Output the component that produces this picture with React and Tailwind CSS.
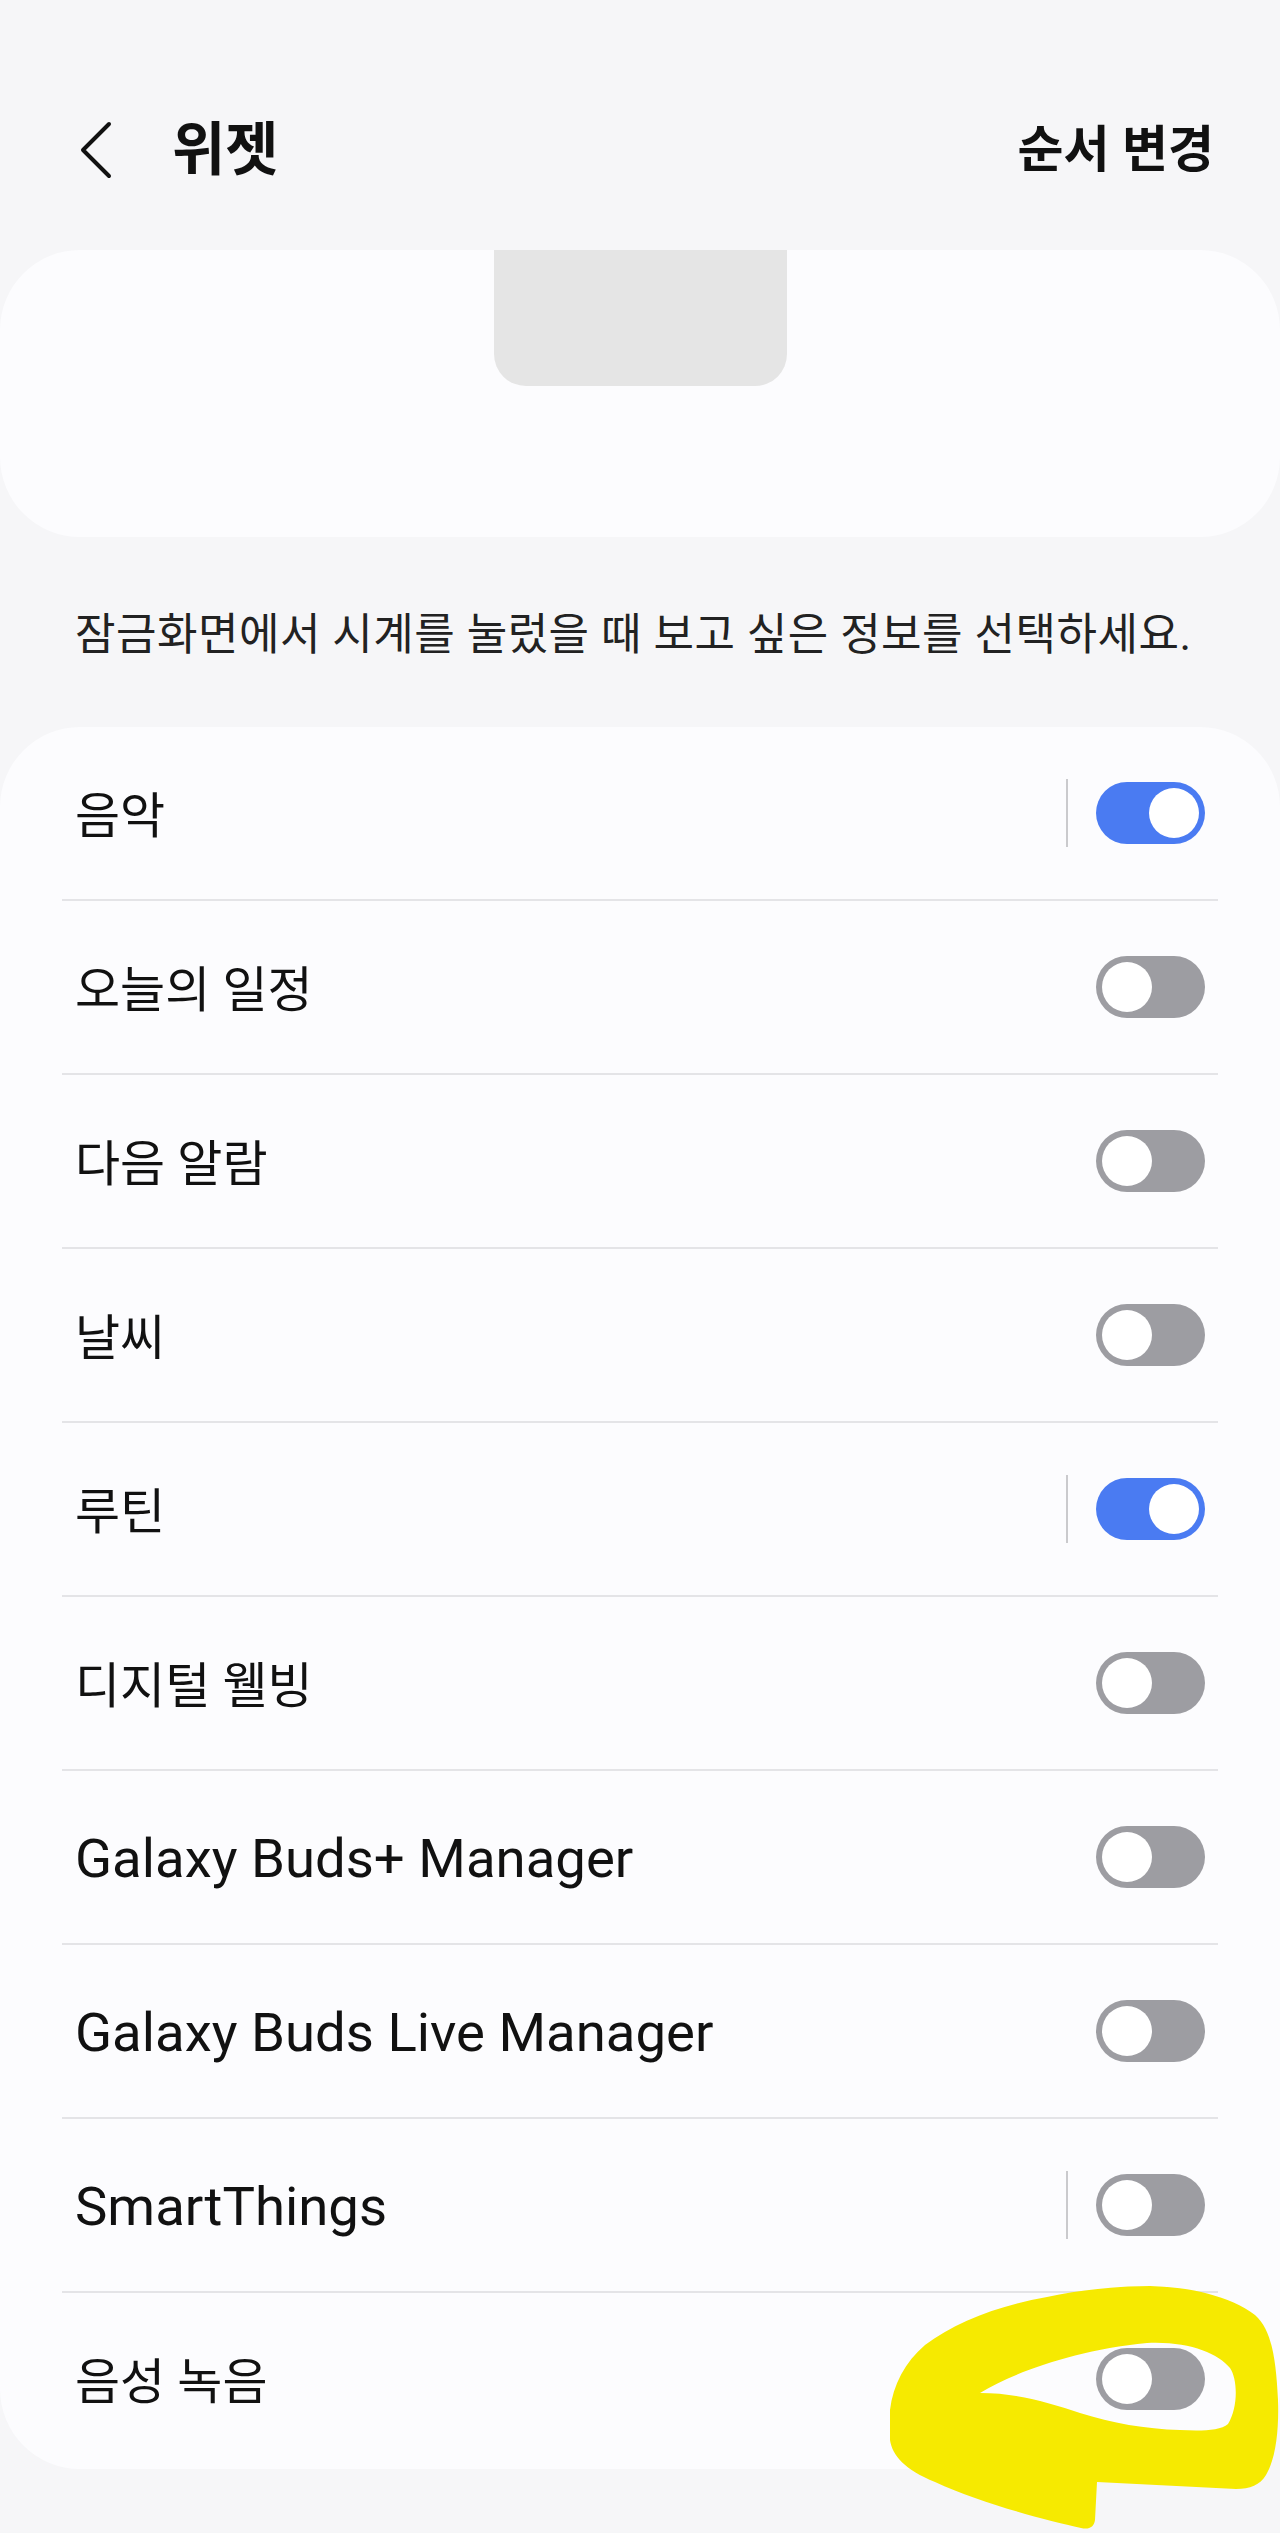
import React from 'react';

const items = [
    { label: '음악', on: true, bar: true },
    { label: '오늘의 일정', on: false },
    { label: '다음 알람', on: false },
    { label: '날씨', on: false },
    { label: '루틴', on: true, bar: true },
    { label: '디지털 웰빙', on: false },
    { label: 'Galaxy Buds+ Manager', on: false, latin: true },
    { label: 'Galaxy Buds Live Manager', on: false, latin: true },
    { label: 'SmartThings', on: false, bar: true, latin: true },
    { label: '음성 녹음', on: false },
];

function Toggle({ on }) {
    return (
        <div
            className={
                on
                    ? 'flex h-[62px] w-[109px] items-center justify-end rounded-full bg-[#4a7bf2] p-[6px]'
                    : 'flex h-[62px] w-[109px] items-center justify-start rounded-full bg-[#9d9da2] p-[6px]'
            }
        >
            <div className="h-[50px] w-[50px] rounded-full bg-white" />
        </div>
    );
}

function Row({ item }) {
    return (
        <div className="flex h-[172px] items-center pl-[13px] pr-[13px]">
            <span
                className={
                    item.latin
                        ? 'flex-1 pt-[4px] text-[54.5px] text-[#111]'
                        : 'flex-1 pt-[8px] text-[49px] text-[#111]'
                }
            >
                {item.label}
            </span>
            {item.bar && <div className="mr-[28px] h-[68px] w-[2px] bg-[#cacacd]" />}
            <Toggle on={item.on} />
        </div>
    );
}

export default function App() {
    return (
        <div
            className="relative min-h-[2533px] w-full overflow-hidden bg-[#f6f6f8]"
            style={{ fontFamily: 'Roboto, "Noto Sans CJK KR", sans-serif' }}
        >
            {/* header */}
            <div className="flex h-[250px] items-center pl-[78px] pr-[66px] pt-[50px]">
                <svg viewBox="0 0 36 60" className="h-[60px] w-[36px]" fill="none">
                    <path d="M31 4 L5 30 L31 56" stroke="#111" strokeWidth="4" strokeLinecap="round" strokeLinejoin="round" />
                </svg>
                <h1 className="ml-[58px] flex-1 text-[58px] font-bold text-[#111]">위젯</h1>
                <span className="text-[50px] font-bold text-[#111]">순서 변경</span>
            </div>

            {/* clock preview */}
            <div className="h-[287px] rounded-[80px] bg-[#fcfcfe]">
                <div className="mx-auto h-[136px] w-[293px] rounded-b-[32px] bg-[#e5e5e5]" />
            </div>

            <p className="pb-[66px] pl-[75px] pt-[72px] text-[44px] leading-[52px] tracking-[0.5px] text-[#222]">
                잠금화면에서 시계를 눌렀을 때 보고 싶은 정보를 선택하세요.
            </p>

            {/* list */}
            <div className="rounded-[80px] bg-[#fcfcfe] px-[62px] pb-[4px]">
                {items.map((item, i) => (
                    <div key={item.label}>
                        {i > 0 && <div className="h-[2px] bg-[#e4e4e7]" />}
                        <Row item={item} />
                    </div>
                ))}
            </div>

            {/* marker annotation */}
            <svg
                className="pointer-events-none absolute left-[880px] top-[2260px] h-[273px] w-[400px]"
                viewBox="880 2260 400 273"
            >
                <path
                    fill="#f6ea00"
                    fillRule="evenodd"
                    d="M890 2410 C893 2385 905 2362 925 2345 C955 2322 1000 2305 1047 2297 C1080 2290 1115 2286 1150 2286 C1190 2287 1230 2296 1255 2315 C1272 2330 1276 2360 1278 2400 C1279 2430 1276 2458 1266 2475 C1260 2485 1250 2489 1236 2489 L1097 2482 L1095 2520 C1094 2527 1089 2530 1081 2528 C1045 2520 980 2503 935 2482 C905 2470 892 2455 890 2440 Z M980 2393 C1015 2372 1075 2350 1147 2343 C1188 2341 1218 2353 1230 2368 C1238 2380 1238 2408 1228 2424 C1220 2431 1200 2431 1180 2430 C1145 2429 1112 2423 1080 2413 C1050 2403 1018 2393 980 2393 Z"
                />
            </svg>
        </div>
    );
}
